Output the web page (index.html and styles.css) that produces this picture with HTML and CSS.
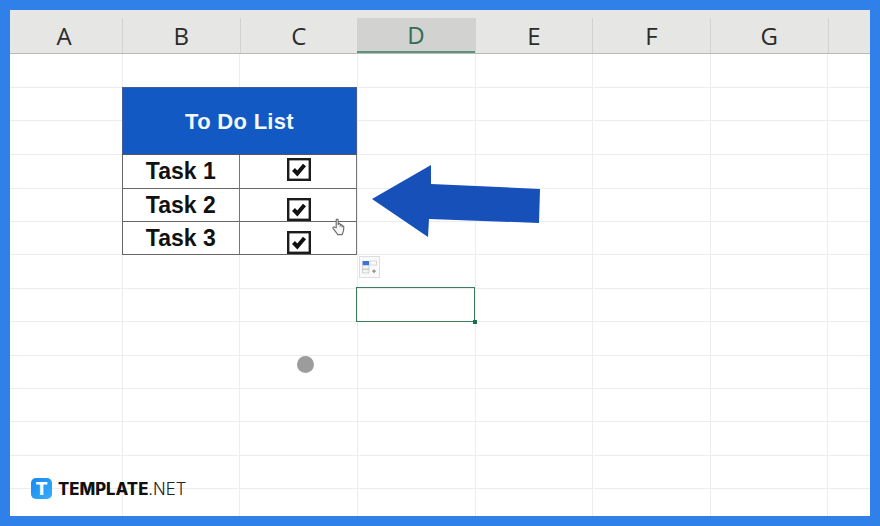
FILE: index.html
```html
<!DOCTYPE html>
<html lang="en">
<head>
    <meta charset="UTF-8">
    <meta name="viewport" content="width=device-width, initial-scale=1.0">
    <title>To Do List in Excel</title>
    <link rel="stylesheet" href="styles.css">
</head>
<body>
    <div class="sheet">
        <div class="col-head">
            <div class="col col-a">A</div>
            <div class="col">B</div>
            <div class="col">C</div>
            <div class="col selected">D</div>
            <div class="col">E</div>
            <div class="col">F</div>
            <div class="col">G</div>
            <div class="col"></div>
        </div>

        <div class="cells">
            <div class="todo-title">To Do List</div>

            <div class="task task-1">Task 1</div>
            <div class="check check-1">
                <svg width="24" height="23" viewBox="0 0 24 23"><rect x="1.2" y="1.2" width="21.6" height="20.6" fill="#fff" stroke="#1c1c1c" stroke-width="2.4"/><path d="M6.5 11.5l3.8 4 7.2-8.5" fill="none" stroke="#111" stroke-width="4"/></svg>
            </div>
            <div class="task task-2">Task 2</div>
            <div class="check check-2">
                <svg width="24" height="23" viewBox="0 0 24 23"><rect x="1.2" y="1.2" width="21.6" height="20.6" fill="#fff" stroke="#1c1c1c" stroke-width="2.4"/><path d="M6.5 11.5l3.8 4 7.2-8.5" fill="none" stroke="#111" stroke-width="4"/></svg>
            </div>
            <div class="task task-3">Task 3</div>
            <div class="check check-3">
                <svg width="24" height="23" viewBox="0 0 24 23"><rect x="1.2" y="1.2" width="21.6" height="20.6" fill="#fff" stroke="#1c1c1c" stroke-width="2.4"/><path d="M6.5 11.5l3.8 4 7.2-8.5" fill="none" stroke="#111" stroke-width="4"/></svg>
            </div>

            <div class="paste-btn">
                <svg width="16" height="15" viewBox="0 0 16 15">
                    <rect x="0.5" y="1" width="6.5" height="4" fill="#3f74d6"/>
                    <rect x="8" y="1" width="6.5" height="4" fill="#fff" stroke="#c4c4c4" stroke-width="0.7"/>
                    <rect x="0.5" y="5.5" width="6.5" height="3.5" fill="#f4f4f4" stroke="#c4c4c4" stroke-width="0.7"/>
                    <rect x="0.5" y="9.5" width="6.5" height="3.5" fill="#f4f4f4" stroke="#c4c4c4" stroke-width="0.7"/>
                    <path d="M12 9.5v3.5M10.2 11.2h3.6" stroke="#888" stroke-width="1.2"/>
                </svg>
            </div>
            <div class="active-cell"><span class="handle"></span></div>
        </div>

        <!-- things drawn on top of the sheet -->
        <svg class="arrow" width="170" height="74" viewBox="0 0 170 74">
            <polygon points="0,34 59,0 59,19 168,24 167,58 57,54 56,72" fill="#1650b8"/>
        </svg>
        <svg class="hand" width="14" height="18" viewBox="0 0 14 18">
            <path d="M4.2 9.5V2.2c0-1.5 2-1.5 2 0V7l.2-1c.4-1 1.7-.8 1.8.2l.1 1c.4-.9 1.7-.7 1.8.3l.1.8c.5-.7 1.6-.4 1.6.6 0 3-.2 5-1.3 6.8-.3.5-.5.8-.5 1H5.6c-.2-1-1-1.7-2-3L1.2 10.6c-.8-1.1.6-2.3 1.6-1.3z" fill="#f6f6f6" stroke="#6f6f6f" stroke-width="1.2"/>
        </svg>
        <span class="click-dot"></span>

        <div class="logo">
            <span class="logo-mark">T</span>
            <span class="logo-text"><b>TEMPLATE</b>.NET</span>
        </div>
    </div>
</body>
</html>
```

FILE: styles.css
```css
:root {
    --line: linear-gradient(#ededed, #ededed);
}
html, body {
    margin: 0;
    padding: 0;
}
body {
    width: 880px;
    height: 526px;
    overflow: hidden;
    box-sizing: border-box;
    padding: 10px;
    background: #2f80e8;
    font-family: "Liberation Sans", Arial, sans-serif;
}
.sheet {
    position: relative;
    width: 860px;
    height: 506px;
    overflow: hidden;
    background: #fff;
}

/* column letters */
.col-head {
    display: grid;
    grid-template-columns: 112px 117.5px 117.5px 118px 117px 118px 117.5px 42.5px;
    grid-template-rows: 43px;
    height: 44px;
    box-sizing: border-box;
    background: #e6e7e5;
    border-bottom: 1px solid #b9bbb9;
    font-family: "Open Sans", sans-serif;
    font-size: 24px;
    line-height: 1;
    color: #2b2b2b;
}
.col {
    display: flex;
    align-items: center;
    justify-content: center;
    box-sizing: border-box;
    margin-top: 8px;
}
.col + .col {
    border-left: 1px solid #d2d3d1;
}
.col-a {
    padding-right: 4px;
}
.col.selected {
    background: #d2d2d1;
    border-left: 0;
    border-bottom: 2px solid #5f9279;
    color: #2f6f55;
}

/* sheet body, gridlines are background layers at the row and column edges */
.cells {
    display: grid;
    grid-template-columns: 112px 117.5px 117.5px 118px 117px 118px 117.5px 42.5px;
    grid-template-rows: 34px 33px 34px 34px 33px 33px 34px 33px 34px 33px 33px 34px 33px 27px;
    height: 462px;
    background:
        var(--line) 112px 0 / 1px 100% no-repeat,
        var(--line) 229px 0 / 1px 100% no-repeat,
        var(--line) 347px 0 / 1px 100% no-repeat,
        var(--line) 465px 0 / 1px 100% no-repeat,
        var(--line) 582px 0 / 1px 100% no-repeat,
        var(--line) 700px 0 / 1px 100% no-repeat,
        var(--line) 817px 0 / 1px 100% no-repeat,
        var(--line) 0 33px / 100% 1px no-repeat,
        var(--line) 0 66px / 100% 1px no-repeat,
        var(--line) 0 100px / 100% 1px no-repeat,
        var(--line) 0 134px / 100% 1px no-repeat,
        var(--line) 0 167px / 100% 1px no-repeat,
        var(--line) 0 200px / 100% 1px no-repeat,
        var(--line) 0 234px / 100% 1px no-repeat,
        var(--line) 0 267px / 100% 1px no-repeat,
        var(--line) 0 301px / 100% 1px no-repeat,
        var(--line) 0 334px / 100% 1px no-repeat,
        var(--line) 0 367px / 100% 1px no-repeat,
        var(--line) 0 401px / 100% 1px no-repeat,
        var(--line) 0 434px / 100% 1px no-repeat;
}

.todo-title {
    grid-column: 2 / 4;
    grid-row: 2 / 4;
    display: flex;
    align-items: center;
    justify-content: center;
    box-sizing: border-box;
    margin-top: -1px;
    padding-top: 2px;
    background: #1259c3;
    border: 1px solid #3f5f96;
    border-bottom-color: #555;
    color: #f4f8fc;
    font-size: 22px;
    font-weight: bold;
    letter-spacing: 0.3px;
}
.task, .check {
    display: flex;
    justify-content: center;
    box-sizing: border-box;
    background: #fff;
    border-bottom: 1.5px solid #666;
    border-right: 1.5px solid #777;
}
.task {
    grid-column: 2;
    align-items: center;
    border-left: 1.5px solid #666;
    color: #111;
    font-size: 23px;
    font-weight: bold;
}
.check {
    grid-column: 3;
    padding-left: 3px;
}
.task-1, .check-1 { grid-row: 4; }
.task-2, .check-2 { grid-row: 5; }
.task-3, .check-3 { grid-row: 6; }
.check-1 { align-items: flex-start; padding-top: 3px; }
.check-2, .check-3 { align-items: flex-end; }
.check svg { display: block; }

.paste-btn {
    grid-column: 4;
    grid-row: 7;
    width: 21px;
    height: 22px;
    margin: 1px 0 0 2px;
    display: flex;
    align-items: center;
    justify-content: center;
    box-sizing: border-box;
    background: #fafafa;
    border: 1px solid #dedede;
}
.active-cell {
    grid-column: 4;
    grid-row: 8;
    position: relative;
    margin: -2px 0 0 -1px;
    border: 1.5px solid #3a7d5e;
}
.handle {
    position: absolute;
    right: -3px;
    bottom: -3px;
    width: 4px;
    height: 4px;
    background: #1f6b4a;
}

.arrow {
    position: absolute;
    left: 362px;
    top: 155px;
}
.hand {
    position: absolute;
    left: 322px;
    top: 208px;
}
.click-dot {
    position: absolute;
    left: 287px;
    top: 346px;
    width: 17px;
    height: 17px;
    border-radius: 50%;
    background: #9c9c9c;
}

.logo {
    position: absolute;
    left: 21px;
    top: 468px;
    display: flex;
    align-items: center;
    gap: 6px;
}
.logo-mark {
    width: 21px;
    height: 21px;
    border-radius: 5px;
    background: linear-gradient(135deg, #1a86ee, #35b0fb);
    color: #fff;
    font-family: "Inter", sans-serif;
    font-size: 18px;
    font-weight: 800;
    line-height: 21px;
    text-align: center;
}
.logo-text {
    font-family: "Inter", sans-serif;
    font-size: 16.7px;
    font-weight: 300;
    color: #222;
}
.logo-text b {
    font-weight: 800;
    color: #111;
}
```
